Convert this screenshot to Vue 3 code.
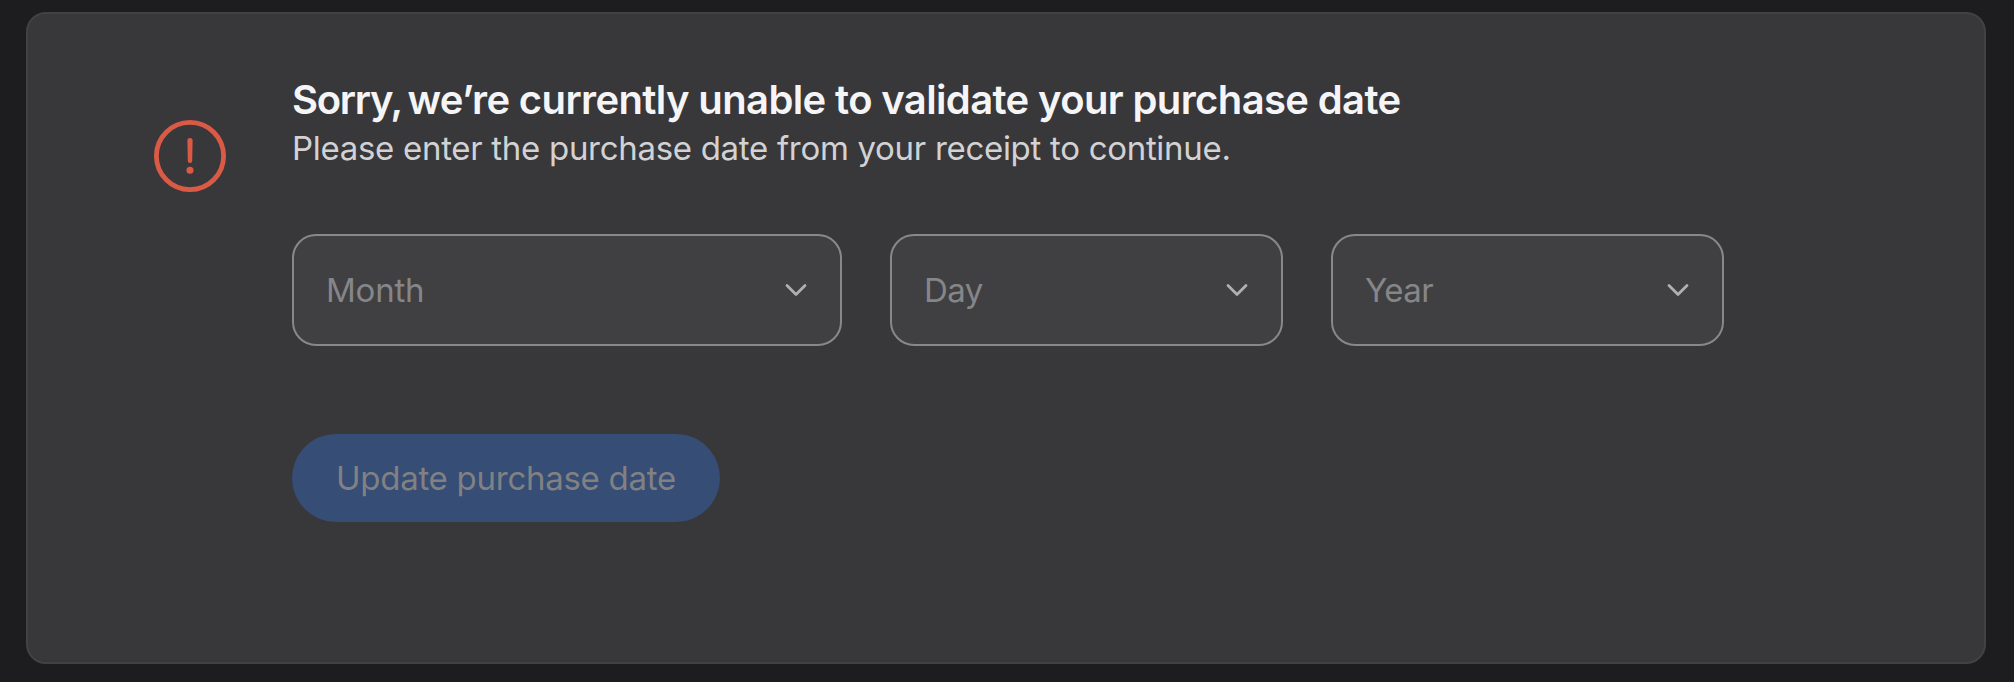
<template>
  <main class="page">
    <section class="card">
      <svg class="alert-icon" viewBox="0 0 72 72" aria-hidden="true">
        <circle class="ring" cx="36" cy="36" r="33.6" />
        <path class="bar" d="M33.4 20.6a2.6 2.6 0 0 1 5.2 0l-.4 20.2a2.2 2.2 0 0 1-4.4 0z" />
        <circle class="dot" cx="36" cy="50.3" r="3.5" />
      </svg>

      <div class="content">
        <h1 class="title"><span class="lead">Sorry,</span> we’re currently unable to validate your purchase date</h1>
        <p class="subtitle">Please enter the purchase date from your receipt to continue.</p>

        <div class="fields">
          <button
            v-for="field in fields"
            :key="field.name"
            type="button"
            class="field"
            :class="field.name"
          >
            <span class="label">{{ field.label }}</span>
            <svg class="chevron" viewBox="0 0 22 14" aria-hidden="true">
              <path d="M2 2.4l9 9 9-9" />
            </svg>
          </button>
        </div>

        <button type="button" class="submit" disabled>
          <span class="submit-text">Update purchase date</span>
        </button>
      </div>
    </section>
  </main>
</template>

<script setup>
const fields = [
  { name: 'month', label: 'Month' },
  { name: 'day', label: 'Day' },
  { name: 'year', label: 'Year' },
]
</script>

<style>
body {
  margin: 0;
  background: #1d1d1f;
}
</style>

<style scoped>
.page {
  box-sizing: border-box;
  height: 682px;
  padding: 12px 28px 18px 26px;
  background: #1d1d1f;
  font-family: Inter, "Liberation Sans", sans-serif;
}

.card {
  box-sizing: border-box;
  display: flex;
  align-items: flex-start;
  height: 652px;
  padding: 64px 0 0 126px;
  border: 2px solid #424245;
  border-radius: 20px;
  background: #38383a;
}

.alert-icon {
  flex: none;
  width: 72px;
  height: 72px;
  margin: 42px 66px 0 0;
}

.ring {
  fill: none;
  stroke: #db5a46;
  stroke-width: 4.8;
}

.bar,
.dot {
  fill: #db5a46;
}

.content {
  flex: none;
}

.title {
  margin: 0;
  font-size: 40px;
  font-weight: 600;
  line-height: 44px;
  letter-spacing: -0.63px;
  color: #f5f5f7;
  white-space: nowrap;
}

.lead {
  margin-right: -4px;
  letter-spacing: -1.3px;
}

.subtitle {
  margin: 1px 0 0;
  font-size: 33px;
  line-height: 50px;
  letter-spacing: -0.3px;
  color: #d2d2d4;
  white-space: nowrap;
}

.fields {
  display: flex;
  gap: 48px;
  margin-top: 61px;
}

.field {
  box-sizing: border-box;
  display: flex;
  align-items: center;
  justify-content: space-between;
  width: 393px;
  height: 112px;
  padding: 0 33px 0 32px;
  border: 2px solid #88888a;
  border-radius: 24px;
  background: #404042;
  color: #868689;
  font-family: inherit;
  font-size: 33px;
  letter-spacing: -0.6px;
}

.field.month {
  width: 550px;
  letter-spacing: -0.2px;
}

.chevron {
  width: 22px;
  height: 14px;
  fill: none;
  stroke: #b0b0b0;
  stroke-width: 2.8;
  stroke-linecap: round;
  stroke-linejoin: round;
}

.submit {
  display: flex;
  align-items: center;
  justify-content: center;
  width: 428px;
  height: 88px;
  margin-top: 88px;
  padding: 0;
  border: none;
  border-radius: 44px;
  background: #364d75;
  color: #818183;
  font-family: inherit;
  font-size: 33px;
  letter-spacing: -0.27px;
  white-space: nowrap;
}
</style>
